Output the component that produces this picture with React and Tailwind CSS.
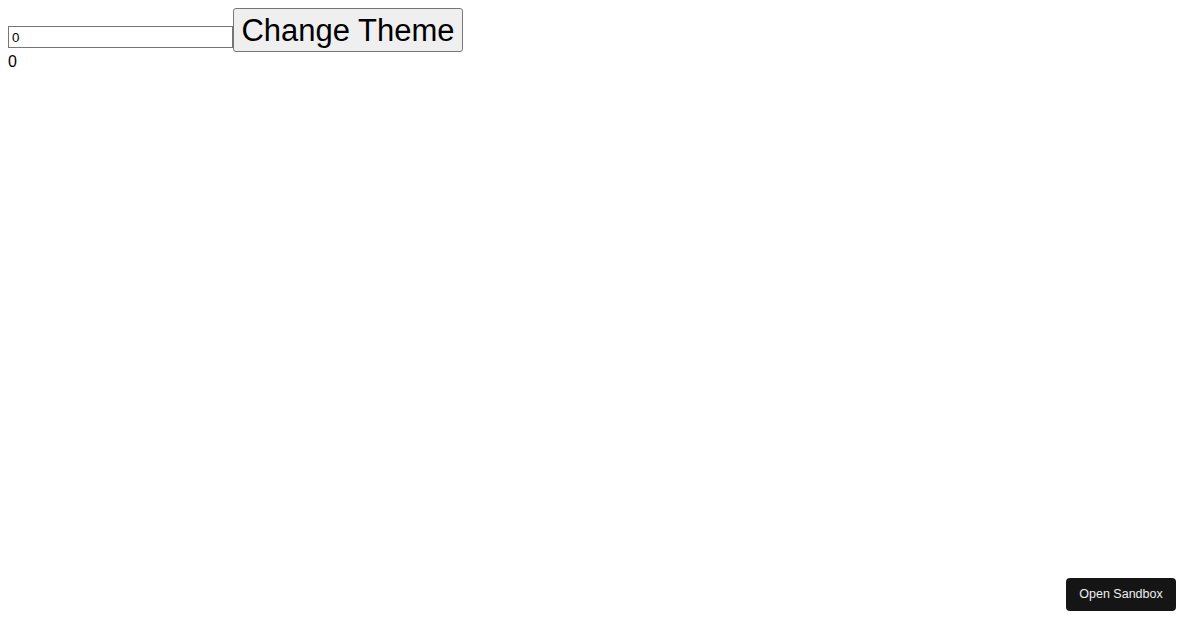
export default function App() {
  return (
    <div className="min-h-[630px] bg-white p-2 font-['Liberation_Sans',Arial,sans-serif] text-black">
      <div className="flex items-start">
        <input
          defaultValue="0"
          className="mt-[18px] box-border h-[22px] w-[225px] border border-[#767676] bg-white px-[3px] font-['Liberation_Sans',Arial,sans-serif] text-[13.33px] leading-none text-black outline-none"
        />
        <button className="box-border flex h-[44px] w-[230px] items-center justify-center whitespace-nowrap rounded-[3px] border border-[#767676] bg-[#efefef] px-[6px] font-['Liberation_Sans',Arial,sans-serif] text-[31px] leading-none text-black">
          Change Theme
        </button>
      </div>
      <div className="mt-[1px] text-[16px] leading-[18px]">0</div>
      <button className="fixed bottom-[19px] right-[24px] flex h-[33px] w-[110px] items-center justify-center rounded-[4px] bg-[#151515] font-['Liberation_Sans',Arial,sans-serif] text-[12.5px] text-[#f0f0f0]">
        Open Sandbox
      </button>
    </div>
  );
}
